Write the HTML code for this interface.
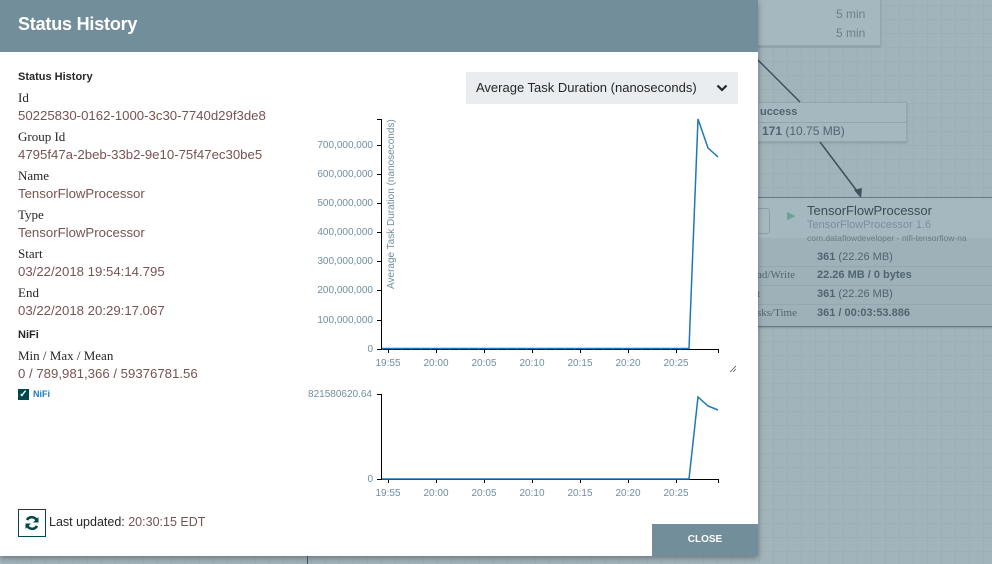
<!DOCTYPE html>
<html><head><style>
*{margin:0;padding:0;box-sizing:border-box}
body{width:992px;height:563px;overflow:hidden;position:relative;font-family:"Liberation Sans",sans-serif;
background-color:#a2b4bb;
background-image:linear-gradient(#9cafb6 1px,transparent 1px),linear-gradient(90deg,#9cafb6 1px,transparent 1px);
background-size:14px 14px;background-position:3px 5px}
.abs{position:absolute}
.box{position:absolute;background:#a6b8bf;border:1px solid #92a6ae;box-shadow:0 1px 2px rgba(0,0,0,.15)}
.cv{color:#4f6670;font-size:12px}
#dlg{position:absolute;left:0;top:0;width:758px;height:556px;background:#fff;box-shadow:0 2px 6px rgba(0,0,0,.35)}
#hdr{height:52px;background:#728e9b;color:#fff;font-size:18px;font-weight:bold;padding:14px 18px;letter-spacing:-0.2px}
.lbl{position:absolute;left:18px;font-family:"Liberation Serif",serif;font-size:13px;color:#262626}
.val{position:absolute;left:18px;font-size:13.2px;color:#775351}
.bold{position:absolute;left:18px;font-size:11px;font-weight:bold;color:#262626}
svg text{font-family:"Liberation Sans",sans-serif;font-size:10px;fill:#6f8ea0}
</style></head><body>
<div class="box" style="left:700px;top:-2px;width:181px;height:48px"></div>
<div class="abs cv" style="left:836px;top:7px;color:#6a8089">5 min</div>
<div class="abs cv" style="left:836px;top:26px;color:#6a8089">5 min</div>
<div class="box" style="left:740px;top:102px;width:167px;height:40px"></div>
<div class="abs" style="left:740px;top:122px;width:167px;height:1px;background:#92a6ae"></div>
<div class="abs cv" style="left:760px;top:106px;font-weight:bold;font-size:11px">uccess</div>
<div class="abs cv" style="left:762px;top:124px"><b>171</b> (10.75 MB)</div>
<svg class="abs" style="left:740px;top:40px" width="150" height="160"><path d="M18 20 L60 62 M80 102 L120 155" stroke="#3e5059" stroke-width="1.5" fill="none"/><path d="M114 150 L121 158 L122 148z" fill="#3e5059"/></svg>
<div class="box" style="left:740px;top:197px;width:260px;height:130px;border-color:#617b85"></div>
<div class="abs" style="left:740px;top:238px;width:260px;height:88px;background:#9fb1b8"></div>
<div class="abs" style="left:740px;top:266px;width:260px;height:1px;background:#93a7ae"></div>
<div class="abs" style="left:740px;top:285px;width:260px;height:1px;background:#93a7ae"></div>
<div class="abs" style="left:740px;top:304px;width:260px;height:1px;background:#93a7ae"></div>
<div class="abs" style="left:755px;top:208px;width:15px;height:26px;border:1.5px solid #8aa0a8;border-radius:3px"></div>
<div class="abs" style="left:787px;top:209px;color:#6aa394;font-size:11px">▶</div>
<div class="abs" style="left:807px;top:203px;font-size:13px;color:#3a4d55">TensorFlowProcessor</div>
<div class="abs" style="left:807px;top:219px;font-size:11px;color:#7890a0">TensorFlowProcessor 1.6</div>
<div class="abs" style="left:807px;top:233px;font-size:8.5px;color:#667c86;white-space:nowrap">com.dataflowdeveloper - nifi-tensorflow-na</div>
<div class="abs cv" style="left:817px;top:251px;font-size:11px"><b>361</b> (22.26 MB)</div>
<div class="abs cv" style="left:757px;top:269px;font-size:11px;font-family:'Liberation Serif',serif">ad/Write</div>
<div class="abs cv" style="left:817px;top:269px;font-size:11px;font-weight:bold">22.26 MB / 0 bytes</div>
<div class="abs cv" style="left:757px;top:288px;font-size:11px;font-family:'Liberation Serif',serif">t</div>
<div class="abs cv" style="left:817px;top:288px;font-size:11px"><b>361</b> (22.26 MB)</div>
<div class="abs cv" style="left:757px;top:307px;font-size:11px;font-family:'Liberation Serif',serif">sks/Time</div>
<div class="abs cv" style="left:817px;top:307px;font-size:11px;font-weight:bold">361 / 00:03:53.886</div>

<div id="dlg">
<div id="hdr">Status History</div>
<div class="bold" style="top:71px">Status History</div>
<div class="lbl" style="top:90px">Id</div>
<div class="val" style="top:108px">50225830-0162-1000-3c30-7740d29f3de8</div>
<div class="lbl" style="top:129px">Group Id</div>
<div class="val" style="top:147px">4795f47a-2beb-33b2-9e10-75f47ec30be5</div>
<div class="lbl" style="top:168px">Name</div>
<div class="val" style="top:186px">TensorFlowProcessor</div>
<div class="lbl" style="top:207px">Type</div>
<div class="val" style="top:225px">TensorFlowProcessor</div>
<div class="lbl" style="top:246px">Start</div>
<div class="val" style="top:264px">03/22/2018 19:54:14.795</div>
<div class="lbl" style="top:285px">End</div>
<div class="val" style="top:303px">03/22/2018 20:29:17.067</div>
<div class="bold" style="top:329px">NiFi</div>
<div class="lbl" style="top:348px">Min / Max / Mean</div>
<div class="val" style="top:366px">0 / 789,981,366 / 59376781.56</div>
<div class="abs" style="left:18px;top:389px;width:11px;height:11px;background:#004849;color:#fff;font-size:10px;line-height:11px;text-align:center;font-weight:bold">✓</div>
<div class="abs" style="left:33px;top:389px;font-size:9px;color:#1a7cc0;font-weight:bold">NiFi</div>

<div class="abs" style="left:466px;top:72px;width:272px;height:32px;background:#e9edf0;font-size:13px;color:#262626;padding:8px 10px">Average Task Duration (nanoseconds)
<svg class="abs" style="right:10px;top:11px" width="12" height="10"><path d="M1.5 2.5 L6 7 L10.5 2.5" stroke="#262626" stroke-width="2.2" fill="none"/></svg></div>

<svg class="abs" style="left:0;top:0" width="758" height="500">
<g stroke="#000" stroke-width="1" fill="none">
<path d="M377 119.5 H381.5 V349.5 H718.5 V353"/>
<path d="M377 145.5H381 M377 174.5H381 M377 203.5H381 M377 232.5H381 M377 261.5H381 M377 290.5H381 M377 320.5H381 M377 349.5H381"/>
<path d="M388.5 349V353 M436.5 349V353 M484.5 349V353 M532.5 349V353 M580.5 349V353 M628.5 349V353 M676.5 349V353"/>
<path d="M377 394.5 H381.5 V479.5 H718.5 V483"/>
<path d="M377 479.5H381 M388.5 479V483 M436.5 479V483 M484.5 479V483 M532.5 479V483 M580.5 479V483 M628.5 479V483 M676.5 479V483"/>
</g>
<g text-anchor="end">
<text x="373" y="148">700,000,000</text><text x="373" y="177">600,000,000</text><text x="373" y="206">500,000,000</text>
<text x="373" y="235">400,000,000</text><text x="373" y="264">300,000,000</text><text x="373" y="293">200,000,000</text>
<text x="373" y="323">100,000,000</text><text x="373" y="352">0</text>
<text x="372" y="397">821580620.64</text><text x="373" y="482">0</text>
</g>
<g text-anchor="middle">
<text x="388" y="366">19:55</text><text x="436" y="366">20:00</text><text x="484" y="366">20:05</text><text x="532" y="366">20:10</text><text x="580" y="366">20:15</text><text x="628" y="366">20:20</text><text x="676" y="366">20:25</text>
<text x="388" y="496">19:55</text><text x="436" y="496">20:00</text><text x="484" y="496">20:05</text><text x="532" y="496">20:10</text><text x="580" y="496">20:15</text><text x="628" y="496">20:20</text><text x="676" y="496">20:25</text>
</g>
<text transform="translate(394,289) rotate(-90)">Average Task Duration (nanoseconds)</text>
<path d="M382 348.5 H689 L698 119 L708 148 L718 157" stroke="#1f77b4" stroke-width="1.5" fill="none"/>
<path d="M382 349 H689" stroke="#1f77b4" stroke-width="2" stroke-dasharray="1 8.6" fill="none"/>
<path d="M382 479 H689 L698 397 L708 406 L718 410" stroke="#1f77b4" stroke-width="1.5" fill="none"/>
<path d="M730 372 L736 366 M733 372 L736 369" stroke="#555" stroke-width="0.8"/>
</svg>

<div class="abs" style="left:18px;top:509px;width:28px;height:28px;border:1px solid #004849;text-align:center">
<svg width="18" height="18" style="margin-top:4px" viewBox="0 0 18 18"><path d="M14 7 A5.5 5.5 0 0 0 4 6" stroke="#004849" stroke-width="2.6" fill="none"/><path d="M15.5 3 V8.5 H10z" fill="#004849"/><path d="M4 11 A5.5 5.5 0 0 0 14 12" stroke="#004849" stroke-width="2.6" fill="none"/><path d="M2.5 15 V9.5 H8z" fill="#004849"/></svg></div>
<div class="abs" style="left:49px;top:515px;font-size:12.5px;color:#262626">Last updated: <span style="color:#775351">20:30:15 EDT</span></div>
<div class="abs" style="left:652px;top:524px;width:106px;height:32px;background:#728e9b;color:#fff;font-size:10px;font-weight:bold;text-align:center;line-height:32px">CLOSE</div>
</div>
<div class="abs" style="left:307px;top:556px;width:1px;height:8px;background:#3e5059"></div>
</body></html>
